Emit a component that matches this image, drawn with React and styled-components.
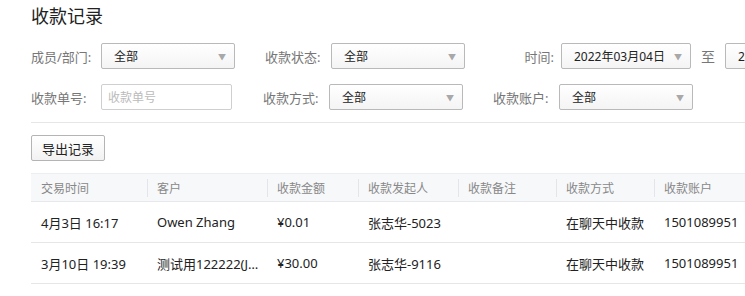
import styled, { createGlobalStyle } from 'styled-components';

const GlobalStyle = createGlobalStyle`
  body {
    margin: 0;
    background: #fff;
    overflow: hidden;
    font-family: "Noto Sans", "Noto Sans CJK SC", sans-serif;
    color: #333;
  }
`;

const Page = styled.div`
  padding: 3px 0 0 31px;
  width: 1100px;
`;

const Title = styled.h1`
  margin: 0;
  font-size: 18px;
  font-weight: 400;
  line-height: 26px;
  color: #222;
`;

const FilterRow = styled.div`
  display: flex;
  align-items: center;
  margin-top: ${(p) => p.top}px;
  height: 26px;
`;

const Field = styled.div`
  display: flex;
  align-items: center;
  margin-right: ${(p) => p.gap || 0}px;
`;

const Label = styled.span`
  width: ${(p) => p.width}px;
  text-align: ${(p) => p.align || 'left'};
  padding-right: ${(p) => (p.align === 'right' ? 7 : 0)}px;
  box-sizing: border-box;
  font-size: 13px;
  color: #777;
  white-space: nowrap;
`;

const Select = styled.div`
  width: ${(p) => p.width || 134}px;
  height: 26px;
  box-sizing: border-box;
  border: 1px solid #b9b9b9;
  border-radius: 2px;
  background: linear-gradient(#ffffff, #f4f4f4);
  display: flex;
  align-items: center;
  justify-content: space-between;
  padding: 0 8px 0 12px;
  font-size: 12px;
  color: #222;
  flex-shrink: 0;
  white-space: nowrap;
`;

const Arrow = styled.span`
  font-size: 8px;
  color: #a8a8a8;
`;

const Input = styled.div`
  width: 131px;
  height: 26px;
  box-sizing: border-box;
  border: 1px solid #cfcfcf;
  border-radius: 2px;
  display: flex;
  align-items: center;
  padding-left: 6px;
  font-size: 12px;
  color: #bbb;
`;

const To = styled.span`
  margin: 0 10px;
  font-size: 14px;
  color: #777;
`;

const Divider = styled.div`
  margin-top: 12px;
  height: 1px;
  background: #e6e6e6;
`;

const Button = styled.button`
  margin-top: 12px;
  width: 74px;
  height: 26px;
  border: 1px solid #b4b4b4;
  border-radius: 2px;
  background: linear-gradient(#ffffff, #f2f2f2);
  font-family: inherit;
  font-size: 13px;
  color: #222;
  padding: 0;
  display: block;
`;

const Table = styled.table`
  margin-top: 12px;
  border-collapse: collapse;
  table-layout: fixed;
  width: 850px;
`;

const Th = styled.th`
  position: relative;
  height: 27px;
  padding: 0 0 0 10px;
  background: #f7f8fa;
  border-top: 1px solid #eceef1;
  border-bottom: 1px solid #e6e8eb;
  text-align: left;
  font-weight: 400;
  font-size: 12px;
  color: #888;
  &:not(:first-child)::before {
    content: '';
    position: absolute;
    left: 0;
    top: 5px;
    height: 18px;
    width: 1px;
    background: #e3e5e8;
  }
`;

const Td = styled.td`
  height: 40px;
  padding: 0 6px 0 10px;
  border-bottom: 1px solid #e6e6e6;
  font-size: 13px;
  color: #222;
  white-space: nowrap;
  overflow: hidden;
  text-overflow: ellipsis;
`;

const columns = [
  { title: '交易时间', width: 116 },
  { title: '客户', width: 120 },
  { title: '收款金额', width: 91 },
  { title: '收款发起人', width: 100 },
  { title: '收款备注', width: 98 },
  { title: '收款方式', width: 98 },
  { title: '收款账户', width: 110 },
  { title: '收款状态', width: 117 },
];

const rows = [
  ['4月3日 16:17', 'Owen Zhang', '¥0.01', '张志华-5023', '', '在聊天中收款', '1501089951', '已收款'],
  ['3月10日 19:39', '测试用122222(Jack)', '¥30.00', '张志华-9116', '', '在聊天中收款', '1501089951', '已收款'],
];

const App = () => (
  <Page>
    <GlobalStyle />
    <Title>收款记录</Title>
    <FilterRow top={14}>
      <Field gap={30}>
        <Label width={70}>成员/部门:</Label>
        <Select>全部<Arrow>▼</Arrow></Select>
      </Field>
      <Field gap={28}>
        <Label width={66}>收款状态:</Label>
        <Select>全部<Arrow>▼</Arrow></Select>
      </Field>
      <Field>
        <Label width={68} align="right">时间:</Label>
        <Select width={130}>2022年03月04日<Arrow>▼</Arrow></Select>
        <To>至</To>
        <Select width={130}>2022年04月04日<Arrow>▼</Arrow></Select>
      </Field>
    </FilterRow>
    <FilterRow top={15}>
      <Field gap={31}>
        <Label width={70}>收款单号:</Label>
        <Input>收款单号</Input>
      </Field>
      <Field gap={30}>
        <Label width={66}>收款方式:</Label>
        <Select>全部<Arrow>▼</Arrow></Select>
      </Field>
      <Field>
        <Label width={66}>收款账户:</Label>
        <Select>全部<Arrow>▼</Arrow></Select>
      </Field>
    </FilterRow>
    <Divider />
    <Button>导出记录</Button>
    <Table>
      <colgroup>
        {columns.map((c) => (
          <col key={c.title} style={{ width: c.width }} />
        ))}
      </colgroup>
      <thead>
        <tr>
          {columns.map((c) => (
            <Th key={c.title}>{c.title}</Th>
          ))}
        </tr>
      </thead>
      <tbody>
        {rows.map((r) => (
          <tr key={r[0]}>
            {r.map((v, i) => (
              <Td key={i}>{v}</Td>
            ))}
          </tr>
        ))}
      </tbody>
    </Table>
  </Page>
);

export default App;
